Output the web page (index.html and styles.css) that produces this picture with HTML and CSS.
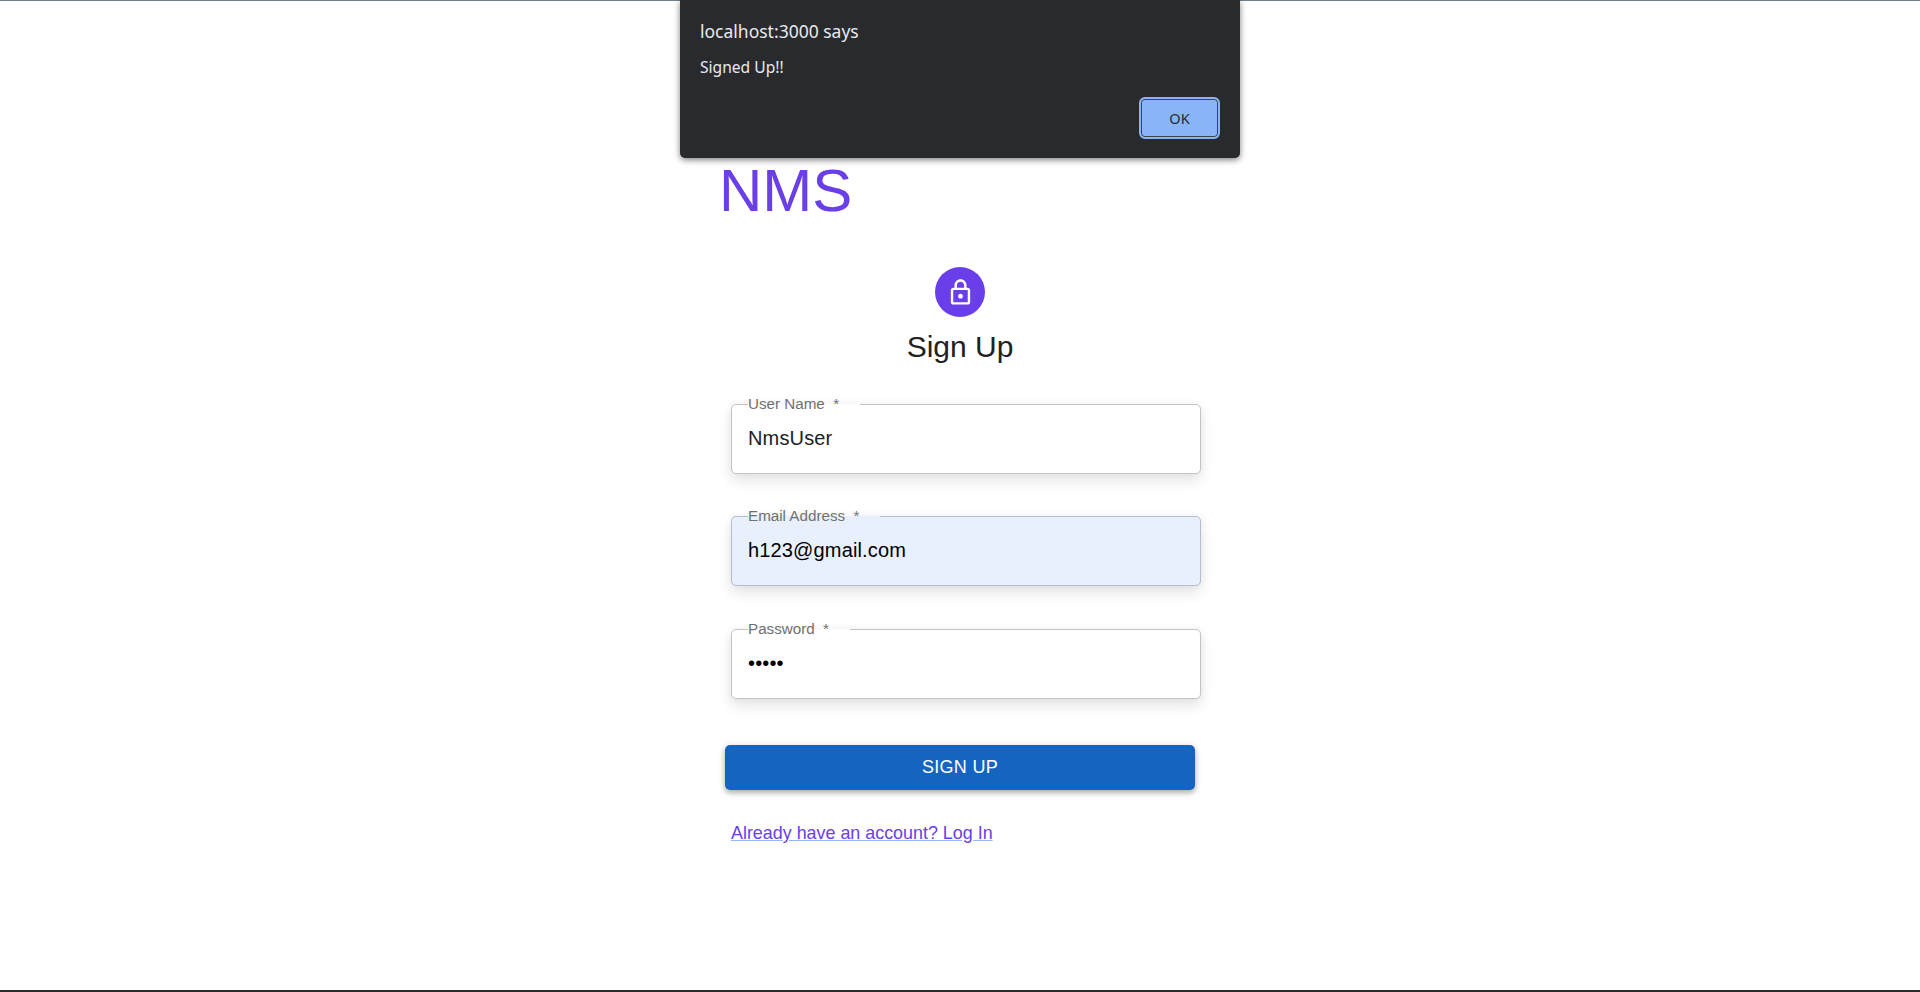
FILE: index.html
```html
<!DOCTYPE html>
<html lang="en">
<head>
<meta charset="utf-8">
<title>NMS</title>
<link rel="stylesheet" href="styles.css">
</head>
<body>
<div class="top-line"></div>
<main class="page">
  <div class="column">
    <h1 class="brand">NMS</h1>
    <div class="avatar">
      <svg class="lock" viewBox="0 0 24 24" aria-hidden="true"><path d="M18 8h-1V6c0-2.76-2.24-5-5-5S7 3.24 7 6v2H6c-1.1 0-2 .9-2 2v10c0 1.1.9 2 2 2h12c1.1 0 2-.9 2-2V10c0-1.1-.9-2-2-2zM9 6c0-1.66 1.34-3 3-3s3 1.34 3 3v2H9V6zm9 14H6V10h12v10zm-6-3c1.1 0 2-.9 2-2s-.9-2-2-2-2 .9-2 2 .9 2 2 2z"/></svg>
    </div>
    <h2 class="title">Sign Up</h2>
    <div class="field field-user">
      <span class="label">User Name&nbsp; *</span>
      <div class="value">NmsUser</div>
    </div>
    <div class="field field-email">
      <span class="label">Email Address&nbsp; *</span>
      <div class="value">h123@gmail.com</div>
    </div>
    <div class="field field-pass">
      <span class="label">Password&nbsp; *</span>
      <div class="value dots">•••••</div>
    </div>
    <button class="submit" type="button">SIGN UP</button>
    <a class="login" href="#">Already have an account? Log In</a>
  </div>
</main>
<div class="bottom-line"></div>
<div class="dialog" role="alertdialog">
  <div class="dialog-title">localhost:3000 says</div>
  <div class="dialog-msg">Signed Up!!</div>
  <div class="dialog-actions"><button class="ok" type="button">OK</button></div>
</div>
</body>
</html>
```
FILE: styles.css
```css
* { box-sizing: border-box; }
html, body { height: 100%; }
body {
  margin: 0;
  display: flex;
  flex-direction: column;
  background: #fff;
  font-family: "Liberation Sans", Arial, sans-serif;
  color: #212121;
  overflow: hidden;
}
.top-line { height: 1px; background: #6f8189; flex: none; }
.bottom-line { height: 2px; background: #2a2a2a; flex: none; }
.page { flex: 1; display: flex; justify-content: center; }
.column {
  width: 470px;
  padding-top: 155px;
  display: flex;
  flex-direction: column;
  align-items: center;
}
.brand {
  align-self: flex-start;
  margin: 0 0 0 -6px;
  font-size: 60px;
  font-weight: 400;
  line-height: 69px;
  color: #6a3ee8;
}
.avatar {
  width: 50px;
  height: 50px;
  margin-top: 42px;
  border-radius: 50%;
  background: #6a3ee8;
  display: flex;
  align-items: center;
  justify-content: center;
}
.lock { width: 29px; height: 29px; fill: #fff; }
.title {
  margin: 13px 0 0;
  font-size: 30px;
  font-weight: 400;
  line-height: 34px;
}
.field {
  position: relative;
  align-self: flex-start;
  width: 470px;
  height: 70px;
  margin-left: 6px;
  border: 1px solid #c4c4c4;
  border-radius: 5px;
  background: #fff;
  box-shadow: 0 7px 14px rgba(0, 0, 0, 0.1), 0 0 8px rgba(0, 0, 0, 0.05);
  display: flex;
  align-items: center;
  padding: 0 0 2px 16px;
}
.field-user { margin-top: 40px; }
.field-email {
  margin-top: 42px;
  background: #e8f0fe;
  border-color: #b4bccd;
}
.field-pass { margin-top: 43px; }
.label {
  position: absolute;
  left: 16px;
  top: -10px;
  padding-right: 21px;
  font-size: 15.2px;
  line-height: 18px;
  color: #707070;
  background: linear-gradient(to bottom, transparent 9px, #fff 9px, #fff 11px, transparent 11px);
}
.field-email .label {
  background: linear-gradient(to bottom, transparent 9px, #e8f0fe 9px, #e8f0fe 11px, transparent 11px);
}
.value { font-size: 20px; line-height: 24px; letter-spacing: 0.15px; color: #212121; }
.field-email .value { color: #000; }
.dots { color: #000; }
.submit {
  margin-top: 46px;
  width: 470px;
  height: 45px;
  border: 0;
  border-radius: 5px;
  background: #1565c0;
  color: #fff;
  font-family: inherit;
  font-size: 18px;
  letter-spacing: 0.3px;
  box-shadow: 0 3px 5px rgba(0, 0, 0, 0.25), 0 1px 8px rgba(0, 0, 0, 0.12);
}
.login {
  align-self: flex-start;
  margin: 31px 0 0 6px;
  font-size: 17.9px;
  line-height: 24px;
  color: #6a3ee8;
  text-decoration-color: #96b8f5;
}
.dialog {
  position: absolute;
  left: 680px;
  top: 0;
  width: 560px;
  height: 158px;
  padding: 20px 20px 0;
  background: #292a2d;
  border-radius: 0 0 5px 5px;
  box-shadow: 0 2px 6px rgba(0, 0, 0, 0.5);
  font-family: "Noto Sans", "Open Sans", sans-serif;
  color: #e8eaed;
  display: flex;
  flex-direction: column;
}
.dialog-title { font-size: 17.5px; line-height: 22px; }
.dialog-msg { margin-top: 15px; font-size: 15.6px; line-height: 20px; }
.dialog-actions { margin-top: 20px; display: flex; justify-content: flex-end; }
.ok {
  width: 81px;
  height: 42px;
  border: 2px solid #8ab4f8;
  border-radius: 6px;
  background: #8ab4f8;
  box-shadow: inset 0 0 0 1px #3c4450;
  color: #292a2d;
  font-family: inherit;
  font-size: 14.5px;
}
```
